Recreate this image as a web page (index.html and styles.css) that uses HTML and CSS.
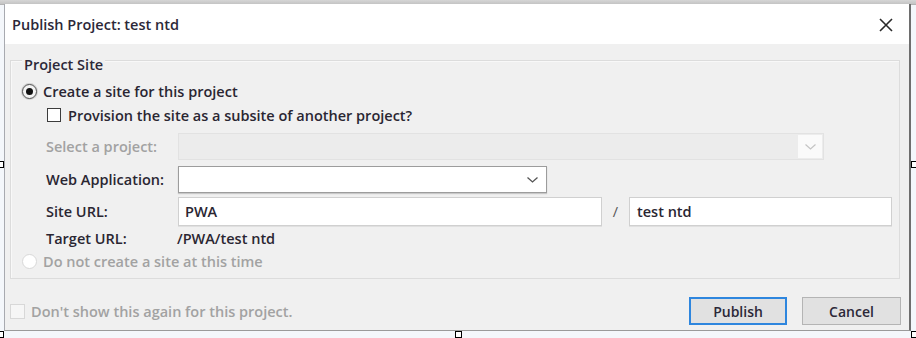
FILE: index.html
```html
<!DOCTYPE html>
<html>
<head>
<meta charset="utf-8">
<link rel="stylesheet" href="styles.css">
</head>
<body>
<div class="backstrip"></div>
<div class="dialog">
  <div class="titlebar">
    <span class="title">Publish Project: test ntd</span>
    <svg class="close" width="14" height="14" viewBox="0 0 14 14"><path d="M1 1 L13 13 M13 1 L1 13" stroke="#2a2a2a" stroke-width="1.6" fill="none"/></svg>
  </div>
  <div class="body">
    <div class="group">
      <div class="legend"><span>Project Site</span></div>
      <div class="row r-radio1">
        <span class="radio checked"><span class="dot"></span></span>
        <span class="txt">Create a site for this project</span>
      </div>
      <div class="row r-check">
        <span class="check"></span>
        <span class="txt">Provision the site as a subsite of another project?</span>
      </div>
      <div class="row r-select">
        <span class="label disabled">Select a project:</span>
        <div class="combo combo-disabled">
          <span class="combo-btn"><svg width="11" height="6" viewBox="0 0 11 6"><path d="M0.5 0.5 L5.5 5 L10.5 0.5" stroke="#c4c4c4" stroke-width="1.2" fill="none"/></svg></span>
        </div>
      </div>
      <div class="row r-web">
        <span class="label">Web Application:</span>
        <div class="combo combo-web">
          <span class="combo-btn"><svg width="11" height="6" viewBox="0 0 11 6"><path d="M0.5 0.5 L5.5 5 L10.5 0.5" stroke="#555" stroke-width="1.3" fill="none"/></svg></span>
        </div>
      </div>
      <div class="row r-site">
        <span class="label">Site URL:</span>
        <div class="textbox tb1">PWA</div>
        <span class="slash">/</span>
        <div class="textbox tb2">test ntd</div>
      </div>
      <div class="row r-target">
        <span class="label">Target URL:</span>
        <span class="value">/PWA/test ntd</span>
      </div>
      <div class="row r-radio2">
        <span class="radio off"></span>
        <span class="txt disabled">Do not create a site at this time</span>
      </div>
    </div>
    <div class="footer">
      <span class="check check-disabled"></span>
      <span class="txt disabled foot-txt">Don't show this again for this project.</span>
      <span class="spacer"></span>
      <button class="btn btn-primary">Publish</button>
      <button class="btn btn-cancel">Cancel</button>
    </div>
  </div>
</div>
<span class="handle h-left"></span>
<span class="handle h-right"></span>
<span class="handle h-bl"></span>
<span class="handle h-bm"></span>
<span class="handle h-br"></span>
</body>
</html>
```

FILE: styles.css
```css
* { box-sizing: border-box; }
html, body { margin: 0; padding: 0; }
body {
  width: 916px;
  height: 338px;
  overflow: hidden;
  background: #f4f7fb;
  font-family: "Open Sans", "Noto Sans", sans-serif;
  font-size: 14.5px;
  font-weight: 600;
  color: #2a2632;
  position: relative;
}
.backstrip {
  height: 5px;
  background: linear-gradient(#d6d6d6, #c4c4c4);
  border-bottom: 1px solid #b4b4b4;
}
.dialog {
  margin-left: 4px;
  width: 907px;
  height: 327px;
  margin-top: -1px;
  border-left: 1px solid #a8aab0;
  border-right: 2px solid #6e6e6e;
  border-bottom: 1px solid #9a9a9a;
  background: #f0f0f0;
  display: flex;
  flex-direction: column;
}
.titlebar {
  height: 40px;
  background: #ffffff;
  display: flex;
  align-items: center;
  padding-left: 7px;
  padding-right: 16px;
  flex-shrink: 0;
}
.title { flex: 1; color: #2c2838; margin-top: 1px; }
.close { display: block; margin-top: 1px; }
.body {
  flex: 1;
  display: flex;
  flex-direction: column;
  padding: 16px 0 0 5px;
}
.group {
  width: 890px;
  height: 219px;
  border: 1px solid #dcdcdc;
  box-shadow: inset 1px 1px 0 #f8f8f8;
  display: flex;
  flex-direction: column;
  padding-left: 11px;
  flex-shrink: 0;
}
.legend {
  height: 12px;
  margin-top: -2px;
  line-height: 12px;
}
.legend span {
  background: #f0f0f0;
  padding: 2px 2px;
  color: #2c2838;
}
.row { display: flex; align-items: center; flex-shrink: 0; }
.disabled { color: #a2a2a2; }
.r-radio1 { height: 18px; margin-top: 11px; }
.r-check { height: 18px; margin-top: 6px; padding-left: 25px; }
.r-select { height: 27px; margin-top: 9px; padding-left: 24px; }
.r-web { height: 27px; margin-top: 6px; padding-left: 24px; }
.r-site { height: 29px; margin-top: 4px; padding-left: 24px; }
.r-target { height: 18px; margin-top: 3px; padding-left: 24px; }
.r-radio2 { height: 18px; margin-top: 5px; }

.radio {
  width: 15px; height: 15px;
  border-radius: 50%;
  display: inline-flex;
  align-items: center;
  justify-content: center;
  margin-right: 6px;
  flex-shrink: 0;
}
.radio.checked { border: 1px solid #555; background: #f4f4f4; box-shadow: 0 0 0 1px #cfcfcf; }
.radio.checked .dot { width: 7px; height: 7px; border-radius: 50%; background: #111; }
.radio.off { border: 1px solid #d8d8d8; background: #ffffff; }

.check {
  width: 14px; height: 14px;
  border: 1px solid #3c3c3c;
  background: #ffffff;
  margin-right: 7px;
  flex-shrink: 0;
}
.check-disabled { border-color: #d8d8d8; background: #f6f6f6; width: 15px; height: 15px; margin-right: 6px; }

.label { width: 132px; flex-shrink: 0; }
.value { margin-left: -1px; }

.combo {
  height: 27px;
  display: flex;
  justify-content: flex-end;
  align-items: center;
}
.combo-disabled {
  width: 646px;
  border: 1px solid #e2e2e2;
  background: #ececec;
  padding-right: 1px;
}
.combo-disabled .combo-btn {
  width: 24px; height: 23px;
  background: #fafafa;
  display: flex; align-items: center; justify-content: center;
}
.combo-web {
  width: 369px;
  border: 1px solid #9c9c9c;
  background: #ffffff;
  box-shadow: 0 1px 1px #c8c8c8;
}
.combo-web .combo-btn {
  width: 24px; height: 23px;
  display: flex; align-items: center; justify-content: center;
  margin-right: 2px;
}

.textbox {
  height: 29px;
  border: 1px solid #d0d0d0;
  background: #ffffff;
  display: flex;
  align-items: center;
  padding-left: 6px;
  box-shadow: 0 1px 0 #e0e0e0;
}
.tb1 { width: 424px; }
.tb2 { width: 263px; padding-left: 7px; }
.slash { width: 27px; text-align: center; color: #555; font-weight: 400; }

.footer {
  display: flex;
  align-items: center;
  margin-top: 18px;
  height: 28px;
  padding-right: 8px;
}
.foot-txt { margin-top: 1px; }
.spacer { flex: 1; }
.btn {
  height: 28px;
  background: #e1e1e1;
  font-family: inherit;
  font-size: 14px;
  font-weight: 600;
  color: #2c2838;
  padding: 0;
}
.btn-primary { width: 98px; border: 2px solid #2e86de; margin-right: 15px; }
.btn-cancel { width: 99px; border: 1px solid #b4b4b4; }

.handle {
  position: absolute;
  width: 7px; height: 7px;
  border: 1px solid #000;
  background: #fff;
}
.h-left { left: -3px; top: 161px; }
.h-right { left: 911px; top: 161px; }
.h-bl { left: -3px; top: 331px; }
.h-bm { left: 455px; top: 331px; }
.h-br { left: 911px; top: 331px; }
```
